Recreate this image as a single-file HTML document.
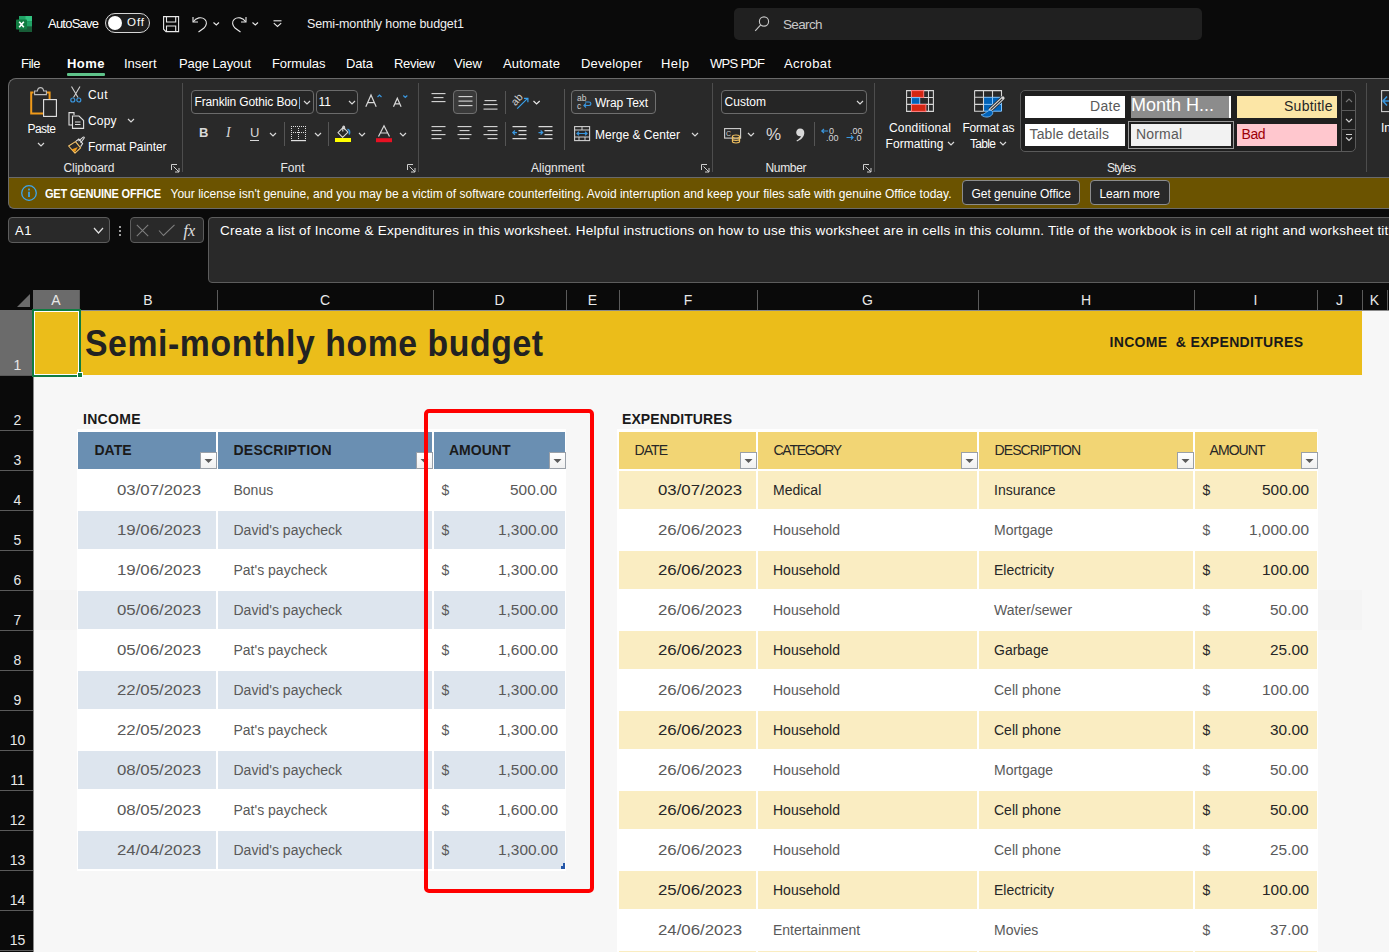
<!DOCTYPE html>
<html><head><meta charset="utf-8">
<style>
*{box-sizing:border-box}
html,body{margin:0;padding:0}
body{width:1389px;height:952px;overflow:hidden;background:#0a0a0a;position:relative;font-family:"Liberation Sans",sans-serif;color:#fff}
.a{position:absolute;white-space:nowrap}
svg{position:absolute;overflow:visible}
</style></head><body>

<svg style="left:16px;top:16px" width="17" height="17" viewBox="0 0 17 17">
<rect x="3" y="0" width="13" height="16" rx="1" fill="#185c37"/>
<rect x="3" y="0" width="13" height="5.3" fill="#21a366"/>
<rect x="9.5" y="0" width="6.5" height="5.3" fill="#33c481"/>
<rect x="9.5" y="5.3" width="6.5" height="5.3" fill="#21a366"/>
<rect x="3" y="10.6" width="13" height="5.4" fill="#185c37"/>
<rect x="0" y="3.5" width="11" height="10" rx="0.8" fill="#107c41"/>
<path d="M3.2 5.8 L7.8 11.2 M7.8 5.8 L3.2 11.2" stroke="#fff" stroke-width="1.6"/>
</svg>
<div class="a" style="left:48.00px;top:16.99px;font-size:13px;line-height:13px;color:#fff;letter-spacing:-0.768px;">AutoSave</div>
<div class="a" style="left:105px;top:13px;width:45px;height:20px;border:1.5px solid #d6d6d6;border-radius:10px;background:#1c1c1c"></div>
<div class="a" style="left:108px;top:16px;width:14px;height:14px;border-radius:7px;background:#fff"></div>
<div class="a" style="left:127.00px;top:17.26px;font-size:11.5px;line-height:11.5px;color:#fff;letter-spacing:0.937px;">Off</div>
<svg style="left:163px;top:16px" width="17" height="17" viewBox="0 0 17 17" fill="none" stroke="#e8e8e8" stroke-width="1.1">
<path d="M0.6 0.6 H15.6 V15.6 H3 L0.6 13.2 Z"/><path d="M3.5 0.6 V6 H12.7 V0.6"/><path d="M3.5 15.6 V10 H12.7 V15.6"/></svg>
<svg style="left:192px;top:16px" width="30" height="17" viewBox="0 0 30 17" fill="none" stroke="#e8e8e8" stroke-width="1.1">
<path d="M1 1 V6 H6"/><path d="M1.3 5.8 C4 1.5 9.5 0.5 12.8 3.3 C15.6 5.8 14.5 9.5 12 12 L6.5 16"/>
<path d="M21.5 6.5 L24.3 9 L27 6.5"/></svg>
<svg style="left:231px;top:16px" width="30" height="17" viewBox="0 0 30 17" fill="none" stroke="#e8e8e8" stroke-width="1.1">
<path d="M15 1 V6 H10"/><path d="M14.7 5.8 C12 1.5 6.5 0.5 3.2 3.3 C0.4 5.8 1.5 9.5 4 12 L9.5 16"/>
<path d="M21.5 6.5 L24.3 9 L27 6.5"/></svg>
<svg style="left:273px;top:20px" width="10" height="8" viewBox="0 0 10 8" fill="none" stroke="#e8e8e8" stroke-width="1.1">
<path d="M0.5 0.8 H8.5"/><path d="M0.8 3.2 L4.5 6.5 L8.2 3.2"/></svg>
<div class="a" style="left:307.00px;top:18.42px;font-size:12.5px;line-height:12.5px;color:#f0f0f0;letter-spacing:-0.117px;">Semi-monthly home budget1</div>
<div class="a" style="left:734px;top:8px;width:468px;height:32px;background:#202020;border-radius:5px"></div>
<svg style="left:754px;top:16px" width="16" height="16" viewBox="0 0 16 16" fill="none" stroke="#c8c8c8" stroke-width="1.1">
<circle cx="10" cy="5.5" r="4.6"/><path d="M6.7 8.8 L1.2 14.8"/></svg>
<div class="a" style="left:783.00px;top:17.57px;font-size:13.5px;line-height:13.5px;color:#c8c8c8;letter-spacing:-0.655px;">Search</div>
<div class="a" style="left:21.00px;top:56.99px;font-size:13px;line-height:13px;color:#fff;letter-spacing:-0.483px;">File</div>
<div class="a" style="left:67.00px;top:56.99px;font-size:13px;line-height:13px;color:#fff;font-weight:700;letter-spacing:0.460px;">Home</div>
<div class="a" style="left:124.00px;top:56.99px;font-size:13px;line-height:13px;color:#fff;letter-spacing:-0.003px;">Insert</div>
<div class="a" style="left:179.00px;top:56.99px;font-size:13px;line-height:13px;color:#fff;letter-spacing:-0.101px;">Page Layout</div>
<div class="a" style="left:272.00px;top:56.99px;font-size:13px;line-height:13px;color:#fff;letter-spacing:-0.097px;">Formulas</div>
<div class="a" style="left:346.00px;top:56.99px;font-size:13px;line-height:13px;color:#fff;letter-spacing:-0.153px;">Data</div>
<div class="a" style="left:394.00px;top:56.99px;font-size:13px;line-height:13px;color:#fff;letter-spacing:-0.325px;">Review</div>
<div class="a" style="left:454.00px;top:56.99px;font-size:13px;line-height:13px;color:#fff;letter-spacing:0.019px;">View</div>
<div class="a" style="left:503.00px;top:56.99px;font-size:13px;line-height:13px;color:#fff;letter-spacing:0.194px;">Automate</div>
<div class="a" style="left:581.00px;top:56.99px;font-size:13px;line-height:13px;color:#fff;letter-spacing:0.218px;">Developer</div>
<div class="a" style="left:661.00px;top:56.99px;font-size:13px;line-height:13px;color:#fff;letter-spacing:0.421px;">Help</div>
<div class="a" style="left:710.00px;top:56.99px;font-size:13px;line-height:13px;color:#fff;letter-spacing:-0.704px;">WPS PDF</div>
<div class="a" style="left:784.00px;top:56.99px;font-size:13px;line-height:13px;color:#fff;letter-spacing:0.366px;">Acrobat</div>
<div class="a" style="left:67px;top:73px;width:38px;height:3px;background:#5fc38a;border-radius:1px"></div>
<div class="a" style="left:8px;top:78px;width:1400px;height:101px;background:#292929;border-top:1px solid #6a6a6a;border-left:1px solid #6a6a6a;border-radius:8px 0 0 0"></div>
<div class="a" style="left:182px;top:83px;width:1px;height:89px;background:#4d4d4d;"></div>
<div class="a" style="left:418px;top:83px;width:1px;height:89px;background:#4d4d4d;"></div>
<div class="a" style="left:712px;top:83px;width:1px;height:89px;background:#4d4d4d;"></div>
<div class="a" style="left:874px;top:83px;width:1px;height:89px;background:#4d4d4d;"></div>
<div class="a" style="left:1366px;top:83px;width:1px;height:89px;background:#4d4d4d;"></div>
<div class="a" style="left:63.50px;top:161.84px;font-size:12px;line-height:12px;color:#e8e8e8;letter-spacing:-0.046px;">Clipboard</div>
<div class="a" style="left:280.50px;top:161.84px;font-size:12px;line-height:12px;color:#e8e8e8;letter-spacing:-0.004px;">Font</div>
<div class="a" style="left:531.00px;top:161.84px;font-size:12px;line-height:12px;color:#e8e8e8;letter-spacing:0.017px;">Alignment</div>
<div class="a" style="left:765.50px;top:161.84px;font-size:12px;line-height:12px;color:#e8e8e8;letter-spacing:-0.336px;">Number</div>
<div class="a" style="left:1107.00px;top:161.84px;font-size:12px;line-height:12px;color:#e8e8e8;letter-spacing:-0.736px;">Styles</div>
<svg style="left:171px;top:164px" width="9" height="9" viewBox="0 0 9 9" fill="none" stroke="#cfcfcf" stroke-width="1"><path d="M0.5 6 V0.5 H6"/><path d="M2.5 2.5 L8 8 M4 8 H8 V4"/></svg>
<svg style="left:407px;top:164px" width="9" height="9" viewBox="0 0 9 9" fill="none" stroke="#cfcfcf" stroke-width="1"><path d="M0.5 6 V0.5 H6"/><path d="M2.5 2.5 L8 8 M4 8 H8 V4"/></svg>
<svg style="left:701px;top:164px" width="9" height="9" viewBox="0 0 9 9" fill="none" stroke="#cfcfcf" stroke-width="1"><path d="M0.5 6 V0.5 H6"/><path d="M2.5 2.5 L8 8 M4 8 H8 V4"/></svg>
<svg style="left:863px;top:164px" width="9" height="9" viewBox="0 0 9 9" fill="none" stroke="#cfcfcf" stroke-width="1"><path d="M0.5 6 V0.5 H6"/><path d="M2.5 2.5 L8 8 M4 8 H8 V4"/></svg>
<svg style="left:0;top:0" width="100" height="160" viewBox="0 0 100 160" fill="none">
<path d="M33.5 92.5 H31.2 V113.4 H43" stroke="#f09a1a" stroke-width="2"/>
<path d="M47 92.5 H49.6 V99" stroke="#f09a1a" stroke-width="2"/>
<path d="M34.6 94.6 V91 H37.4 C37.6 88.6 38.8 87.6 40.5 87.6 C42.2 87.6 43.4 88.6 43.6 91 H46.4 V94.6 Z" stroke="#bdbdbd" stroke-width="1.1" fill="#292929"/>
<rect x="43.6" y="99.6" width="12.8" height="16.8" stroke="#e6e6e6" stroke-width="1.1" fill="#292929"/>
</svg>
<div class="a" style="left:27.50px;top:122.84px;font-size:12px;line-height:12px;color:#fff;letter-spacing:-0.547px;">Paste</div>
<svg style="left:37px;top:142px" width="8" height="5" viewBox="0 0 8 5" fill="none" stroke="#d8d8d8" stroke-width="1.2"><path d="M1 1 L4.0 4 L7 1"/></svg>
<svg style="left:70px;top:86px" width="12" height="17" viewBox="0 0 12 17" fill="none">
<path d="M1.5 0.5 L8 11.5 M10 0.5 L3.5 11.5" stroke="#cfcfcf" stroke-width="1.1"/>
<circle cx="2.8" cy="14" r="2" stroke="#3a96dd" stroke-width="1.2"/><circle cx="8.8" cy="14" r="2" stroke="#3a96dd" stroke-width="1.2"/></svg>
<div class="a" style="left:88.00px;top:88.84px;font-size:12px;line-height:12px;color:#fff;letter-spacing:0.413px;">Cut</div>
<svg style="left:68px;top:112px" width="17" height="17" viewBox="0 0 17 17" fill="none" stroke="#e0e0e0" stroke-width="1.1">
<path d="M6 3 V0.6 H1 V13 H4"/><path d="M4.5 4 H11 L15.6 8.5 V16.4 H4.5 Z"/><path d="M7 10 H12.5 M7 12.5 H12.5"/></svg>
<div class="a" style="left:88.00px;top:114.84px;font-size:12px;line-height:12px;color:#fff;letter-spacing:0.162px;">Copy</div>
<svg style="left:127px;top:118px" width="8" height="5" viewBox="0 0 8 5" fill="none" stroke="#d8d8d8" stroke-width="1.2"><path d="M1 1 L4.0 4 L7 1"/></svg>
<svg style="left:0;top:0" width="100" height="160" viewBox="0 0 100 160" fill="none">
<path d="M68.6 146 L75.5 141.6 L80.6 147.8 L75 153.2 Z" stroke="#f3c26a" stroke-width="1.1" stroke-linejoin="round"/>
<path d="M71.5 149.5 L77.8 147 L75 152.2 Z" fill="#f09a1a"/>
<path d="M75.8 141.4 L78.8 139 L82.6 143.6 L80.6 146.6" stroke="#e0e0e0" stroke-width="1.1"/>
<path d="M78.5 141.2 L83.2 137.2 C83.8 136.7 84.6 137.4 84.2 138 L80.6 143" stroke="#e0e0e0" stroke-width="1.1"/>
</svg>
<div class="a" style="left:88.00px;top:140.84px;font-size:12px;line-height:12px;color:#fff;letter-spacing:-0.066px;">Format Painter</div>
<div class="a" style="left:191px;top:90px;width:123px;height:24px;border:1px solid #6b6b6b;border-radius:4px;background:#252525"></div>
<div class="a" style="left:194.50px;top:95.84px;font-size:12px;line-height:12px;color:#fff;letter-spacing:-0.132px;">Franklin Gothic Boo</div>
<div class="a" style="left:298.5px;top:97px;width:1px;height:12px;background:#6aa8e0;"></div>
<svg style="left:303px;top:100px" width="8" height="5" viewBox="0 0 8 5" fill="none" stroke="#d8d8d8" stroke-width="1.2"><path d="M1 1 L4.0 4 L7 1"/></svg>
<div class="a" style="left:316px;top:90px;width:42px;height:24px;border:1px solid #6b6b6b;border-radius:4px;background:#252525"></div>
<div class="a" style="left:318.50px;top:95.84px;font-size:12px;line-height:12px;color:#fff;">11</div>
<svg style="left:348px;top:100px" width="8" height="5" viewBox="0 0 8 5" fill="none" stroke="#d8d8d8" stroke-width="1.2"><path d="M1 1 L4.0 4 L7 1"/></svg>
<svg style="left:365px;top:93px" width="44" height="15" viewBox="0 0 44 15" fill="none" stroke="#d8d8d8" stroke-width="1.2">
<path d="M0.8 13.8 L6 2 L11.2 13.8 M2.6 9.6 H9.4"/><path d="M12.5 4 L14.5 2 L16.5 4" stroke="#3a96dd"/>
<path d="M28.5 13.8 L32.3 5.2 L36.1 13.8 M29.8 10.8 H34.8"/><path d="M38.3 2.5 L40.3 4.5 L42.3 2.5" stroke="#3a96dd"/></svg>
<div class="a" style="left:199.00px;top:126.49px;font-size:13px;line-height:13px;color:#d8d8d8;font-weight:700;">B</div>
<div class="a" style="left:226.00px;top:125.65px;font-size:14px;line-height:14px;color:#d8d8d8;font-family:'Liberation Serif',serif;font-style:italic;">I</div>
<div class="a" style="left:250.00px;top:126.49px;font-size:13px;line-height:13px;color:#d8d8d8;">U</div>
<div class="a" style="left:250px;top:140px;width:9px;height:1px;background:#d8d8d8;"></div>
<svg style="left:269px;top:132px" width="8" height="5" viewBox="0 0 8 5" fill="none" stroke="#d8d8d8" stroke-width="1.2"><path d="M1 1 L4.0 4 L7 1"/></svg>
<div class="a" style="left:284px;top:122px;width:1px;height:24px;background:#555;"></div>
<svg style="left:0;top:0" width="400" height="160" viewBox="0 0 400 160"><g fill="#e0e0e0"><rect x="291" y="126" width="1" height="1"/><rect x="293" y="126" width="1" height="1"/><rect x="295" y="126" width="1" height="1"/><rect x="297" y="126" width="1" height="1"/><rect x="299" y="126" width="1" height="1"/><rect x="301" y="126" width="1" height="1"/><rect x="303" y="126" width="1" height="1"/><rect x="305" y="126" width="1" height="1"/><rect x="291" y="128" width="1" height="1"/><rect x="305" y="128" width="1" height="1"/><rect x="298" y="128" width="1" height="1"/><rect x="291" y="130" width="1" height="1"/><rect x="305" y="130" width="1" height="1"/><rect x="298" y="130" width="1" height="1"/><rect x="291" y="132" width="1" height="1"/><rect x="305" y="132" width="1" height="1"/><rect x="298" y="132" width="1" height="1"/><rect x="291" y="134" width="1" height="1"/><rect x="305" y="134" width="1" height="1"/><rect x="298" y="134" width="1" height="1"/><rect x="291" y="136" width="1" height="1"/><rect x="305" y="136" width="1" height="1"/><rect x="298" y="136" width="1" height="1"/><rect x="291" y="138" width="1" height="1"/><rect x="305" y="138" width="1" height="1"/><rect x="298" y="138" width="1" height="1"/><rect x="293" y="132" width="1" height="1"/><rect x="295" y="132" width="1" height="1"/><rect x="297" y="132" width="1" height="1"/><rect x="299" y="132" width="1" height="1"/><rect x="301" y="132" width="1" height="1"/><rect x="303" y="132" width="1" height="1"/><rect x="291" y="140" width="15" height="1.2"/></g></svg>
<svg style="left:314px;top:132px" width="8" height="5" viewBox="0 0 8 5" fill="none" stroke="#d8d8d8" stroke-width="1.2"><path d="M1 1 L4.0 4 L7 1"/></svg>
<div class="a" style="left:328px;top:122px;width:1px;height:24px;background:#555;"></div>
<svg style="left:0;top:0" width="400" height="160" viewBox="0 0 400 160" fill="none">
<path d="M338 132.6 L343.2 127.4 L348 132.2 L342.6 137.4 Z" stroke="#d8d8d8" stroke-width="1.1" stroke-linejoin="round"/>
<path d="M342.8 131.5 V127.2 C342.8 125.8 344.6 125.8 344.6 127.2 V129.5" stroke="#d8d8d8" stroke-width="1.1"/>
<path d="M347.5 129.2 C349.5 130 350 132 349.2 134.5" stroke="#3a96dd" stroke-width="1.6"/>
<rect x="335" y="138" width="16" height="4" fill="#ffff00"/></svg>
<svg style="left:358px;top:132px" width="8" height="5" viewBox="0 0 8 5" fill="none" stroke="#d8d8d8" stroke-width="1.2"><path d="M1 1 L4.0 4 L7 1"/></svg>
<svg style="left:375px;top:125px" width="18" height="18" viewBox="0 0 18 18" fill="none">
<path d="M3.5 11.5 L9 0.8 L14.5 11.5 M5.4 8 H12.6" stroke="#d8d8d8" stroke-width="1.2"/>
<rect x="1" y="13.2" width="16" height="4" fill="#e81123"/></svg>
<svg style="left:399px;top:132px" width="8" height="5" viewBox="0 0 8 5" fill="none" stroke="#d8d8d8" stroke-width="1.2"><path d="M1 1 L4.0 4 L7 1"/></svg>
<svg style="left:431px;top:93px" width="18" height="18" viewBox="0 0 18 18" fill="none" stroke="#d8d8d8" stroke-width="1.1"><path d="M0.5 0.6 H14.5"/><path d="M2.5 4.6 H12.5"/><path d="M0.5 8.6 H14.5"/></svg>
<div class="a" style="left:453px;top:90px;width:24px;height:24px;border:1px solid #707070;border-radius:4px;background:#3a3a3a"></div>
<svg style="left:458px;top:96px" width="18" height="18" viewBox="0 0 18 18" fill="none" stroke="#d8d8d8" stroke-width="1.1"><path d="M0.5 0.6 H14.5"/><path d="M0.5 5.1 H14.5"/><path d="M0.5 9.6 H14.5"/></svg>
<svg style="left:483px;top:100px" width="18" height="18" viewBox="0 0 18 18" fill="none" stroke="#d8d8d8" stroke-width="1.1"><path d="M1.5 0.6 H13.5"/><path d="M0.5 4.6 H14.5"/><path d="M0.5 9.1 H14.5"/></svg>
<div class="a" style="left:505px;top:91px;width:1px;height:23px;background:#555;"></div>
<svg style="left:0;top:0" width="600" height="160" viewBox="0 0 600 160" fill="none">
<text x="0" y="0" font-family="Liberation Sans" font-size="10.5" fill="#d0d0d0" transform="translate(515.5 106.2) rotate(-48)">ab</text>
<path d="M517.2 108.6 L527.6 98.4 M524 98.4 H527.9 V102.2" stroke="#3aa0ea" stroke-width="1.2"/>
<path d="M533.5 101 L536.6 104 L539.7 101" stroke="#e8e8e8" stroke-width="1.2"/></svg>
<div class="a" style="left:564px;top:89px;width:1px;height:61px;background:#555;"></div>
<div class="a" style="left:571px;top:90px;width:85px;height:24px;border:1px solid #707070;border-radius:4px;background:#2e2e2e"></div>
<svg style="left:576px;top:94px" width="17" height="17" viewBox="0 0 17 17" fill="none">
<text x="1" y="7" font-family="Liberation Sans" font-size="8.5" fill="#d0d0d0">ab</text>
<text x="1" y="15" font-family="Liberation Sans" font-size="8.5" fill="#d0d0d0">c</text>
<path d="M8 11.5 H13 C15.5 11.5 15.5 8 13 8 H9" stroke="#3a96dd" stroke-width="1.2"/><path d="M10 9.5 L8 11.5 L10 13.5" stroke="#3a96dd" stroke-width="1.2"/></svg>
<div class="a" style="left:595.00px;top:96.84px;font-size:12px;line-height:12px;color:#fff;letter-spacing:-0.072px;">Wrap Text</div>
<svg style="left:431px;top:126px" width="18" height="18" viewBox="0 0 18 18" fill="none" stroke="#d8d8d8" stroke-width="1.1"><path d="M0.5 0.6 H14.5"/><path d="M0.5 4.6 H10.5"/><path d="M0.5 8.6 H14.5"/><path d="M0.5 12.6 H10.5"/></svg>
<svg style="left:457px;top:126px" width="18" height="18" viewBox="0 0 18 18" fill="none" stroke="#d8d8d8" stroke-width="1.1"><path d="M0.5 0.6 H14.5"/><path d="M2.5 4.6 H12.5"/><path d="M0.5 8.6 H14.5"/><path d="M2.5 12.6 H12.5"/></svg>
<svg style="left:483px;top:126px" width="18" height="18" viewBox="0 0 18 18" fill="none" stroke="#d8d8d8" stroke-width="1.1"><path d="M0.5 0.6 H14.5"/><path d="M4.5 4.6 H14.5"/><path d="M0.5 8.6 H14.5"/><path d="M4.5 12.6 H14.5"/></svg>
<div class="a" style="left:505px;top:122px;width:1px;height:24px;background:#555;"></div>
<svg style="left:512px;top:126px" width="16" height="15" viewBox="0 0 16 15" fill="none">
<path d="M0.5 0.6 H14.5 M6.5 4.6 H14.5 M6.5 8.6 H14.5 M0.5 12.6 H14.5" stroke="#d8d8d8" stroke-width="1.1"/>
<path d="M0.8 6.6 H5 M3 4.5 L0.8 6.6 L3 8.7" stroke="#3a96dd" stroke-width="1.2"/></svg>
<svg style="left:538px;top:126px" width="16" height="15" viewBox="0 0 16 15" fill="none">
<path d="M0.5 0.6 H14.5 M6.5 4.6 H14.5 M6.5 8.6 H14.5 M0.5 12.6 H14.5" stroke="#d8d8d8" stroke-width="1.1"/>
<path d="M0.5 6.6 H4.7 M2.6 4.5 L4.7 6.6 L2.6 8.7" stroke="#3a96dd" stroke-width="1.2"/></svg>
<svg style="left:574px;top:126px" width="17" height="16" viewBox="0 0 17 16" fill="none">
<rect x="0.6" y="0.6" width="15" height="14" stroke="#d0d0d0" stroke-width="1.1"/>
<path d="M0.6 4 H15.6 M0.6 11 H15.6 M8 0.6 V4 M5 11 V14.6 M11 11 V14.6" stroke="#d0d0d0" stroke-width="1"/>
<path d="M3 7.5 H13 M5 5.8 L3 7.5 L5 9.2 M11 5.8 L13 7.5 L11 9.2" stroke="#3a96dd" stroke-width="1.2"/></svg>
<div class="a" style="left:595.00px;top:128.84px;font-size:12px;line-height:12px;color:#fff;letter-spacing:0.023px;">Merge &amp; Center</div>
<svg style="left:691px;top:132px" width="8" height="5" viewBox="0 0 8 5" fill="none" stroke="#d8d8d8" stroke-width="1.2"><path d="M1 1 L4.0 4 L7 1"/></svg>
<div class="a" style="left:721px;top:90px;width:146px;height:24px;border:1px solid #6b6b6b;border-radius:4px;background:#252525"></div>
<div class="a" style="left:724.50px;top:95.84px;font-size:12px;line-height:12px;color:#fff;letter-spacing:0.031px;">Custom</div>
<svg style="left:856px;top:100px" width="8" height="5" viewBox="0 0 8 5" fill="none" stroke="#d8d8d8" stroke-width="1.2"><path d="M1 1 L4.0 4 L7 1"/></svg>
<svg style="left:724px;top:128px" width="18" height="16" viewBox="0 0 18 16" fill="none">
<rect x="0.6" y="0.6" width="16" height="9.5" stroke="#d0d0d0" stroke-width="1.1" fill="#292929"/>
<text x="2" y="8" font-family="Liberation Sans" font-size="7" fill="#d0d0d0">C</text>
<ellipse cx="12" cy="8.5" rx="3.6" ry="1.5" stroke="#f0c060" stroke-width="1.1" fill="#292929"/>
<path d="M8.4 8.5 V13.6 C8.4 15.4 15.6 15.4 15.6 13.6 V8.5 M8.4 11 C8.4 12.8 15.6 12.8 15.6 11" stroke="#f0c060" stroke-width="1.1" fill="none"/></svg>
<svg style="left:747px;top:132px" width="8" height="5" viewBox="0 0 8 5" fill="none" stroke="#d8d8d8" stroke-width="1.2"><path d="M1 1 L4.0 4 L7 1"/></svg>
<div class="a" style="left:766.00px;top:126.11px;font-size:17px;line-height:17px;color:#d8d8d8;">%</div>
<svg style="left:795px;top:128px" width="11" height="14" viewBox="0 0 11 14"><path d="M5 0.5 C7.8 0.5 9.5 2.5 9.3 5.3 C9 9 6 12 2 13.5 L1.5 12.6 C4 11.2 5.6 9.5 6 8.3 C3 8.6 1.2 6.8 1.2 4.5 C1.2 2.2 2.8 0.5 5 0.5 Z" fill="#d8d8d8"/></svg>
<div class="a" style="left:814px;top:122px;width:1px;height:24px;background:#555;"></div>
<svg style="left:821px;top:126px" width="44" height="16" viewBox="0 0 44 16" fill="none">
<path d="M0.8 5 H7 M3 3 L0.8 5 L3 7" stroke="#3a96dd" stroke-width="1.2"/>
<text x="8" y="8" font-family="Liberation Sans" font-size="9" fill="#d8d8d8">0</text>
<text x="5" y="15" font-family="Liberation Sans" font-size="9" fill="#d8d8d8">.00</text>
<text x="29" y="8" font-family="Liberation Sans" font-size="9" fill="#d8d8d8">.00</text>
<path d="M25.5 11.5 H32 M30 9.5 L32 11.5 L30 13.5" stroke="#3a96dd" stroke-width="1.2"/>
<text x="33" y="15" font-family="Liberation Sans" font-size="9" fill="#d8d8d8">.0</text></svg>
<svg style="left:0;top:0" width="960" height="160" viewBox="0 0 960 160" fill="none">
<path d="M906.6 90.6 H933.4 V111.4 H906.6 Z M906.6 97.5 H933.4 M906.6 104.4 H933.4 M911.5 90.6 V111.4 M928.5 90.6 V111.4" stroke="#d6d6d6" stroke-width="1.1"/>
<rect x="911.5" y="90.6" width="12.2" height="6.8" fill="#d42612" stroke="#ff7a7a" stroke-width="1"/>
<rect x="911.5" y="97.6" width="8.2" height="6.6" fill="#0062b8" stroke="#80c4ff" stroke-width="1"/>
<rect x="911.5" y="104.5" width="14.4" height="6.9" fill="#d42612" stroke="#ff7a7a" stroke-width="1"/>
</svg>
<div class="a" style="left:889.00px;top:121.84px;font-size:12px;line-height:12px;color:#fff;letter-spacing:0.196px;">Conditional</div>
<div class="a" style="left:885.50px;top:137.84px;font-size:12px;line-height:12px;color:#fff;letter-spacing:0.072px;">Formatting</div>
<svg style="left:947px;top:141px" width="8" height="5" viewBox="0 0 8 5" fill="none" stroke="#d8d8d8" stroke-width="1.2"><path d="M1 1 L4.0 4 L7 1"/></svg>
<svg style="left:0;top:0" width="1020" height="160" viewBox="0 0 1020 160" fill="none">
<rect x="983.5" y="97.3" width="18" height="13.9" fill="#0062b8"/>
<path d="M983.5 97.3 H1001.5 V111.2 H983.5 M992.5 97.3 V111.2 M983.5 104.4 H1001.5" stroke="#80c4ff" stroke-width="1"/>
<path d="M974.6 90.6 H1001.5 V96.8 M974.6 90.6 V111.2 H983.5 M974.6 97.3 H983.5 M974.6 104.4 H983.5 M983.5 90.6 V111.2 M992.5 90.6 V97.3" stroke="#d6d6d6" stroke-width="1.1"/>
<path d="M1003 98 L990.2 110" stroke="#292929" stroke-width="5"/>
<path d="M1003 98 L990.2 110" stroke="#d6d6d6" stroke-width="3.2" stroke-linecap="round"/>
<path d="M1002.2 98.8 L990.6 109.6" stroke="#292929" stroke-width="1.1"/>
<path d="M981 114.6 C984 114.8 986 112.2 988.4 110.8 C990.4 109.8 992.8 110.6 992.8 112.8 C992.6 115.6 989 117.4 985.8 117 C983.8 116.8 982 115.8 981 114.6 Z" fill="#0062b8" stroke="#80c4ff" stroke-width="0.8"/>
</svg>
<div class="a" style="left:962.50px;top:121.84px;font-size:12px;line-height:12px;color:#fff;letter-spacing:-0.252px;">Format as</div>
<div class="a" style="left:970.00px;top:137.84px;font-size:12px;line-height:12px;color:#fff;letter-spacing:-0.672px;">Table</div>
<svg style="left:999px;top:141px" width="8" height="5" viewBox="0 0 8 5" fill="none" stroke="#d8d8d8" stroke-width="1.2"><path d="M1 1 L4.0 4 L7 1"/></svg>
<div class="a" style="left:1020px;top:90px;width:336px;height:62px;border:1px solid #5a5a5a;border-radius:5px;background:#1f1f1f"></div>
<div class="a" style="left:1341px;top:91px;width:1px;height:60px;background:#5a5a5a;"></div>
<div class="a" style="left:1342px;top:110px;width:13px;height:1px;background:#5a5a5a;"></div>
<div class="a" style="left:1342px;top:129px;width:13px;height:1px;background:#5a5a5a;"></div>
<svg style="left:1343px;top:95px" width="12" height="50" viewBox="0 0 12 50" fill="none" stroke="#d0d0d0" stroke-width="1.1">
<path d="M3 7 L6 4 L9 7" stroke="#777"/><path d="M3 24 L6 27 L9 24"/><path d="M3 39.5 H9 M3 42.5 L6 45.5 L9 42.5"/></svg>
<div class="a" style="left:1025px;top:96px;width:100px;height:22px;background:#fff;"></div>
<div class="a" style="left:1090.00px;top:98.95px;font-size:14px;line-height:14px;color:#595959;letter-spacing:0.309px;">Date</div>
<div class="a" style="left:1131px;top:96px;width:98px;height:22px;background:#8c8c8c;"></div>
<div class="a" style="left:1229px;top:96px;width:2px;height:22px;background:#fff;"></div>
<div class="a" style="left:1131px;top:96px;width:98px;height:22px;overflow:hidden"><div class="a" style="left:0;top:-2px;font-size:18px;line-height:22px;color:#fff">Month H...</div></div>
<div class="a" style="left:1237px;top:96px;width:100px;height:22px;background:#fce6a6;"></div>
<div class="a" style="left:1284.00px;top:98.75px;font-size:14px;line-height:14px;color:#262626;letter-spacing:0.257px;">Subtitle</div>
<div class="a" style="left:1025px;top:124px;width:100px;height:22px;background:#fff;"></div>
<div class="a" style="left:1029.50px;top:126.95px;font-size:14px;line-height:14px;color:#595959;letter-spacing:0.139px;">Table details</div>
<div class="a" style="left:1128px;top:121px;width:106px;height:28px;border:1px solid #9a9a9a;background:#1f1f1f"></div>
<div class="a" style="left:1131px;top:124px;width:100px;height:22px;background:#f2f2f2;"></div>
<div class="a" style="left:1136.00px;top:126.95px;font-size:14px;line-height:14px;color:#595959;letter-spacing:0.176px;">Normal</div>
<div class="a" style="left:1237px;top:124px;width:100px;height:22px;background:#ffc7ce;"></div>
<div class="a" style="left:1241.50px;top:126.65px;font-size:14px;line-height:14px;color:#9c0006;letter-spacing:-0.456px;">Bad</div>
<svg style="left:1381px;top:90px" width="12" height="22" viewBox="0 0 12 22" fill="none">
<rect x="0.6" y="0.6" width="14" height="21" stroke="#d0d0d0" stroke-width="1.1"/>
<path d="M2 11 H12 M6 6.5 L2 11 L6 15.5" stroke="#3a96dd" stroke-width="1.6"/></svg>
<div class="a" style="left:1381.00px;top:121.84px;font-size:12px;line-height:12px;color:#fff;">In</div>
<div class="a" style="left:8px;top:177px;width:1400px;height:32px;background:#6b5300;border-top:1px solid #6a6a6a;border-left:1px solid #6a6a6a;border-bottom:1px solid #6a6a6a;border-radius:0 0 0 6px"></div>
<svg style="left:21px;top:185px" width="17" height="17" viewBox="0 0 17 17" fill="none">
<circle cx="8" cy="8" r="7.3" stroke="#3fa6ec" stroke-width="1.3"/><path d="M8 6.8 V12" stroke="#3fa6ec" stroke-width="1.7"/><rect x="7.1" y="3.6" width="1.8" height="1.8" fill="#3fa6ec"/></svg>
<div class="a" style="left:45.00px;top:187.72px;font-size:12.5px;line-height:12.5px;color:#fff;font-weight:700;letter-spacing:-0.212px;transform:scaleX(0.8800);transform-origin:0 0;">GET GENUINE OFFICE</div>
<div class="a" style="left:170.50px;top:188.14px;font-size:12px;line-height:12px;color:#fff;letter-spacing:0.018px;">Your license isn&#x27;t genuine, and you may be a victim of software counterfeiting. Avoid interruption and keep your files safe with genuine Office today.</div>
<div class="a" style="left:962px;top:180px;width:118px;height:25px;border:1px solid #8c8c8c;border-radius:4px;background:#292929"></div>
<div class="a" style="left:971.50px;top:187.84px;font-size:12px;line-height:12px;color:#fff;letter-spacing:-0.020px;">Get genuine Office</div>
<div class="a" style="left:1090px;top:180px;width:80px;height:25px;border:1px solid #8c8c8c;border-radius:4px;background:#292929"></div>
<div class="a" style="left:1099.50px;top:187.84px;font-size:12px;line-height:12px;color:#fff;letter-spacing:-0.096px;">Learn more</div>
<div class="a" style="left:8px;top:217px;width:102px;height:26px;background:#292929;border:1px solid #5c5c5c;border-radius:4px"></div>
<div class="a" style="left:15.00px;top:223.99px;font-size:13px;line-height:13px;color:#fff;letter-spacing:0.598px;">A1</div>
<svg style="left:93px;top:227px" width="12" height="8" viewBox="0 0 12 8" fill="none" stroke="#e0e0e0" stroke-width="1.2"><path d="M1 1 L5.5 6 L10 1"/></svg>
<div class="a" style="left:119px;top:226px;width:2px;height:2px;background:#d0d0d0;border-radius:1px"></div>
<div class="a" style="left:119px;top:230px;width:2px;height:2px;background:#d0d0d0;border-radius:1px"></div>
<div class="a" style="left:119px;top:234px;width:2px;height:2px;background:#d0d0d0;border-radius:1px"></div>
<div class="a" style="left:130px;top:217px;width:74px;height:26px;background:#292929;border:1px solid #5c5c5c;border-radius:4px"></div>
<svg style="left:136px;top:224px" width="40" height="13" viewBox="0 0 40 13" fill="none" stroke="#7e7e7e" stroke-width="1.1">
<path d="M0.8 0.8 L12.2 12.2 M12.2 0.8 L0.8 12.2"/><path d="M23 6.5 L27.5 11.5 L38.5 0.8"/></svg>
<div class="a" style="left:183.50px;top:222.95px;font-size:16px;line-height:16px;color:#e0e0e0;font-family:'Liberation Serif',serif;font-style:italic;">fx</div>
<div class="a" style="left:208px;top:217px;width:1200px;height:66px;background:#292929;border:1px solid #5c5c5c;border-radius:4px"></div>
<div class="a" style="left:209px;top:218px;width:1180px;height:40px;overflow:hidden">
<div class="a" style="left:11.00px;top:5.57px;font-size:13.5px;line-height:13.5px;color:#fff;letter-spacing:0.235px;">Create a list of Income &amp; Expenditures in this worksheet. Helpful instructions on how to use this worksheet are in cells in this column. Title of the workbook is in cell at right and worksheet title</div>
</div>
<div class="a" style="left:33px;top:310px;width:1356px;height:642px;background:#f7f7f7;"></div>
<div class="a" style="left:33px;top:310px;width:1329px;height:65px;background:#ebbd1a;"></div>
<div class="a" style="left:85.00px;top:325.25px;font-size:37.5px;line-height:37.5px;color:#222;font-weight:700;letter-spacing:0.657px;transform:scaleX(0.9000);transform-origin:0 0;">Semi-monthly home budget</div>
<div class="a" style="left:1109.50px;top:335.15px;font-size:14px;line-height:14px;color:#1a1a1a;font-weight:700;letter-spacing:0.324px;white-space:pre;">INCOME  &amp; EXPENDITURES</div>
<div class="a" style="left:33px;top:290px;width:46px;height:20px;background:#6b6b6b;"></div>
<div class="a" style="left:51.33px;top:293.15px;font-size:14px;line-height:14px;color:#e8e8e8;">A</div>
<div class="a" style="left:79px;top:290px;width:1px;height:20px;background:#5a5a5a;"></div>
<div class="a" style="left:143.33px;top:293.15px;font-size:14px;line-height:14px;color:#e8e8e8;">B</div>
<div class="a" style="left:217px;top:290px;width:1px;height:20px;background:#5a5a5a;"></div>
<div class="a" style="left:319.94px;top:293.15px;font-size:14px;line-height:14px;color:#e8e8e8;">C</div>
<div class="a" style="left:433px;top:290px;width:1px;height:20px;background:#5a5a5a;"></div>
<div class="a" style="left:494.44px;top:293.15px;font-size:14px;line-height:14px;color:#e8e8e8;">D</div>
<div class="a" style="left:566px;top:290px;width:1px;height:20px;background:#5a5a5a;"></div>
<div class="a" style="left:587.83px;top:293.15px;font-size:14px;line-height:14px;color:#e8e8e8;">E</div>
<div class="a" style="left:619px;top:290px;width:1px;height:20px;background:#5a5a5a;"></div>
<div class="a" style="left:683.72px;top:293.15px;font-size:14px;line-height:14px;color:#e8e8e8;">F</div>
<div class="a" style="left:757px;top:290px;width:1px;height:20px;background:#5a5a5a;"></div>
<div class="a" style="left:862.06px;top:293.15px;font-size:14px;line-height:14px;color:#e8e8e8;">G</div>
<div class="a" style="left:978px;top:290px;width:1px;height:20px;background:#5a5a5a;"></div>
<div class="a" style="left:1080.94px;top:293.15px;font-size:14px;line-height:14px;color:#e8e8e8;">H</div>
<div class="a" style="left:1194px;top:290px;width:1px;height:20px;background:#5a5a5a;"></div>
<div class="a" style="left:1253.56px;top:293.15px;font-size:14px;line-height:14px;color:#e8e8e8;">I</div>
<div class="a" style="left:1317px;top:290px;width:1px;height:20px;background:#5a5a5a;"></div>
<div class="a" style="left:1336.00px;top:293.15px;font-size:14px;line-height:14px;color:#e8e8e8;">J</div>
<div class="a" style="left:1362px;top:290px;width:1px;height:20px;background:#5a5a5a;"></div>
<div class="a" style="left:1369.83px;top:293.15px;font-size:14px;line-height:14px;color:#e8e8e8;">K</div>
<div class="a" style="left:1387px;top:290px;width:1px;height:20px;background:#5a5a5a;"></div>
<div class="a" style="left:0px;top:310px;width:1389px;height:1px;background:#8a8a8a;"></div>
<svg style="left:0;top:290px" width="33" height="20"><polygon points="30,4 30,17 17,17" fill="#6b6b6b"/></svg>
<div class="a" style="left:33px;top:310px;width:1px;height:642px;background:#8a8a8a;"></div>
<div class="a" style="left:0px;top:310px;width:33px;height:65px;background:#6b6b6b;"></div>
<div class="a" style="left:13.61px;top:358.15px;font-size:14px;line-height:14px;color:#e8e8e8;">1</div>
<div class="a" style="left:0px;top:375px;width:33px;height:1px;background:#5a5a5a;"></div>
<div class="a" style="left:13.61px;top:413.15px;font-size:14px;line-height:14px;color:#e8e8e8;">2</div>
<div class="a" style="left:0px;top:430px;width:33px;height:1px;background:#5a5a5a;"></div>
<div class="a" style="left:13.61px;top:453.15px;font-size:14px;line-height:14px;color:#e8e8e8;">3</div>
<div class="a" style="left:0px;top:470px;width:33px;height:1px;background:#5a5a5a;"></div>
<div class="a" style="left:13.61px;top:493.15px;font-size:14px;line-height:14px;color:#e8e8e8;">4</div>
<div class="a" style="left:0px;top:510px;width:33px;height:1px;background:#5a5a5a;"></div>
<div class="a" style="left:13.61px;top:533.15px;font-size:14px;line-height:14px;color:#e8e8e8;">5</div>
<div class="a" style="left:0px;top:550px;width:33px;height:1px;background:#5a5a5a;"></div>
<div class="a" style="left:13.61px;top:573.15px;font-size:14px;line-height:14px;color:#e8e8e8;">6</div>
<div class="a" style="left:0px;top:590px;width:33px;height:1px;background:#5a5a5a;"></div>
<div class="a" style="left:13.61px;top:613.15px;font-size:14px;line-height:14px;color:#e8e8e8;">7</div>
<div class="a" style="left:0px;top:630px;width:33px;height:1px;background:#5a5a5a;"></div>
<div class="a" style="left:13.61px;top:653.15px;font-size:14px;line-height:14px;color:#e8e8e8;">8</div>
<div class="a" style="left:0px;top:670px;width:33px;height:1px;background:#5a5a5a;"></div>
<div class="a" style="left:13.61px;top:693.15px;font-size:14px;line-height:14px;color:#e8e8e8;">9</div>
<div class="a" style="left:0px;top:710px;width:33px;height:1px;background:#5a5a5a;"></div>
<div class="a" style="left:9.71px;top:733.15px;font-size:14px;line-height:14px;color:#e8e8e8;">10</div>
<div class="a" style="left:0px;top:750px;width:33px;height:1px;background:#5a5a5a;"></div>
<div class="a" style="left:10.23px;top:773.15px;font-size:14px;line-height:14px;color:#e8e8e8;">11</div>
<div class="a" style="left:0px;top:790px;width:33px;height:1px;background:#5a5a5a;"></div>
<div class="a" style="left:9.71px;top:813.15px;font-size:14px;line-height:14px;color:#e8e8e8;">12</div>
<div class="a" style="left:0px;top:830px;width:33px;height:1px;background:#5a5a5a;"></div>
<div class="a" style="left:9.71px;top:853.15px;font-size:14px;line-height:14px;color:#e8e8e8;">13</div>
<div class="a" style="left:0px;top:870px;width:33px;height:1px;background:#5a5a5a;"></div>
<div class="a" style="left:9.71px;top:893.15px;font-size:14px;line-height:14px;color:#e8e8e8;">14</div>
<div class="a" style="left:0px;top:910px;width:33px;height:1px;background:#5a5a5a;"></div>
<div class="a" style="left:9.71px;top:933.15px;font-size:14px;line-height:14px;color:#e8e8e8;">15</div>
<div class="a" style="left:0px;top:950px;width:33px;height:1px;background:#5a5a5a;"></div>
<div class="a" style="left:83.00px;top:412.15px;font-size:14px;line-height:14px;color:#1a1a1a;font-weight:700;letter-spacing:0.300px;">INCOME</div>
<div class="a" style="left:622.00px;top:412.15px;font-size:14px;line-height:14px;color:#1a1a1a;font-weight:700;letter-spacing:0.099px;">EXPENDITURES</div>
<div class="a" style="left:77px;top:429px;width:489px;height:442px;background:#fff;"></div>
<div class="a" style="left:78px;top:432px;width:138px;height:37px;background:#6a8fb2;"></div>
<div class="a" style="left:218px;top:432px;width:214px;height:37px;background:#6a8fb2;"></div>
<div class="a" style="left:434px;top:432px;width:131px;height:37px;background:#6a8fb2;"></div>
<div class="a" style="left:94.50px;top:443.15px;font-size:14px;line-height:14px;color:#1a1a1a;font-weight:700;">DATE</div>
<div class="a" style="left:233.50px;top:443.15px;font-size:14px;line-height:14px;color:#1a1a1a;font-weight:700;letter-spacing:0.232px;">DESCRIPTION</div>
<div class="a" style="left:449.00px;top:443.15px;font-size:14px;line-height:14px;color:#1a1a1a;font-weight:700;">AMOUNT</div>
<div class="a" style="left:200px;top:452px;width:17px;height:17px;background:linear-gradient(#fff,#f0f0f0);border:1px solid #9aa0a8"></div>
<svg style="left:200px;top:452px" width="17" height="17"><polygon points="4.5,7 12.5,7 8.5,11" fill="#5a5a5a"/></svg>
<div class="a" style="left:416px;top:452px;width:17px;height:17px;background:linear-gradient(#fff,#f0f0f0);border:1px solid #9aa0a8"></div>
<svg style="left:416px;top:452px" width="17" height="17"><polygon points="4.5,7 12.5,7 8.5,11" fill="#5a5a5a"/></svg>
<div class="a" style="left:549px;top:452px;width:17px;height:17px;background:linear-gradient(#fff,#f0f0f0);border:1px solid #9aa0a8"></div>
<svg style="left:549px;top:452px" width="17" height="17"><polygon points="4.5,7 12.5,7 8.5,11" fill="#5a5a5a"/></svg>
<div class="a" style="left:117.42px;top:483.15px;font-size:14px;line-height:14px;color:#595959;transform:scaleX(1.2000);transform-origin:0 0;">03/07/2023</div>
<div class="a" style="left:233.50px;top:483.15px;font-size:14px;line-height:14px;color:#595959;">Bonus</div>
<div class="a" style="left:441.50px;top:483.15px;font-size:14px;line-height:14px;color:#595959;">$</div>
<div class="a" style="left:510.40px;top:483.15px;font-size:14px;line-height:14px;color:#595959;transform:scaleX(1.1000);transform-origin:0 0;">500.00</div>
<div class="a" style="left:78px;top:511px;width:138px;height:38px;background:#dde5ee;"></div>
<div class="a" style="left:218px;top:511px;width:214px;height:38px;background:#dde5ee;"></div>
<div class="a" style="left:434px;top:511px;width:131px;height:38px;background:#dde5ee;"></div>
<div class="a" style="left:117.42px;top:523.15px;font-size:14px;line-height:14px;color:#595959;transform:scaleX(1.2000);transform-origin:0 0;">19/06/2023</div>
<div class="a" style="left:233.50px;top:523.15px;font-size:14px;line-height:14px;color:#595959;">David&#x27;s paycheck</div>
<div class="a" style="left:441.50px;top:523.15px;font-size:14px;line-height:14px;color:#595959;">$</div>
<div class="a" style="left:497.55px;top:523.15px;font-size:14px;line-height:14px;color:#595959;transform:scaleX(1.1000);transform-origin:0 0;">1,300.00</div>
<div class="a" style="left:117.42px;top:563.15px;font-size:14px;line-height:14px;color:#595959;transform:scaleX(1.2000);transform-origin:0 0;">19/06/2023</div>
<div class="a" style="left:233.50px;top:563.15px;font-size:14px;line-height:14px;color:#595959;">Pat&#x27;s paycheck</div>
<div class="a" style="left:441.50px;top:563.15px;font-size:14px;line-height:14px;color:#595959;">$</div>
<div class="a" style="left:497.55px;top:563.15px;font-size:14px;line-height:14px;color:#595959;transform:scaleX(1.1000);transform-origin:0 0;">1,300.00</div>
<div class="a" style="left:78px;top:591px;width:138px;height:38px;background:#dde5ee;"></div>
<div class="a" style="left:218px;top:591px;width:214px;height:38px;background:#dde5ee;"></div>
<div class="a" style="left:434px;top:591px;width:131px;height:38px;background:#dde5ee;"></div>
<div class="a" style="left:117.42px;top:603.15px;font-size:14px;line-height:14px;color:#595959;transform:scaleX(1.2000);transform-origin:0 0;">05/06/2023</div>
<div class="a" style="left:233.50px;top:603.15px;font-size:14px;line-height:14px;color:#595959;">David&#x27;s paycheck</div>
<div class="a" style="left:441.50px;top:603.15px;font-size:14px;line-height:14px;color:#595959;">$</div>
<div class="a" style="left:497.55px;top:603.15px;font-size:14px;line-height:14px;color:#595959;transform:scaleX(1.1000);transform-origin:0 0;">1,500.00</div>
<div class="a" style="left:117.42px;top:643.15px;font-size:14px;line-height:14px;color:#595959;transform:scaleX(1.2000);transform-origin:0 0;">05/06/2023</div>
<div class="a" style="left:233.50px;top:643.15px;font-size:14px;line-height:14px;color:#595959;">Pat&#x27;s paycheck</div>
<div class="a" style="left:441.50px;top:643.15px;font-size:14px;line-height:14px;color:#595959;">$</div>
<div class="a" style="left:497.55px;top:643.15px;font-size:14px;line-height:14px;color:#595959;transform:scaleX(1.1000);transform-origin:0 0;">1,600.00</div>
<div class="a" style="left:78px;top:671px;width:138px;height:38px;background:#dde5ee;"></div>
<div class="a" style="left:218px;top:671px;width:214px;height:38px;background:#dde5ee;"></div>
<div class="a" style="left:434px;top:671px;width:131px;height:38px;background:#dde5ee;"></div>
<div class="a" style="left:117.42px;top:683.15px;font-size:14px;line-height:14px;color:#595959;transform:scaleX(1.2000);transform-origin:0 0;">22/05/2023</div>
<div class="a" style="left:233.50px;top:683.15px;font-size:14px;line-height:14px;color:#595959;">David&#x27;s paycheck</div>
<div class="a" style="left:441.50px;top:683.15px;font-size:14px;line-height:14px;color:#595959;">$</div>
<div class="a" style="left:497.55px;top:683.15px;font-size:14px;line-height:14px;color:#595959;transform:scaleX(1.1000);transform-origin:0 0;">1,300.00</div>
<div class="a" style="left:117.42px;top:723.15px;font-size:14px;line-height:14px;color:#595959;transform:scaleX(1.2000);transform-origin:0 0;">22/05/2023</div>
<div class="a" style="left:233.50px;top:723.15px;font-size:14px;line-height:14px;color:#595959;">Pat&#x27;s paycheck</div>
<div class="a" style="left:441.50px;top:723.15px;font-size:14px;line-height:14px;color:#595959;">$</div>
<div class="a" style="left:497.55px;top:723.15px;font-size:14px;line-height:14px;color:#595959;transform:scaleX(1.1000);transform-origin:0 0;">1,300.00</div>
<div class="a" style="left:78px;top:751px;width:138px;height:38px;background:#dde5ee;"></div>
<div class="a" style="left:218px;top:751px;width:214px;height:38px;background:#dde5ee;"></div>
<div class="a" style="left:434px;top:751px;width:131px;height:38px;background:#dde5ee;"></div>
<div class="a" style="left:117.42px;top:763.15px;font-size:14px;line-height:14px;color:#595959;transform:scaleX(1.2000);transform-origin:0 0;">08/05/2023</div>
<div class="a" style="left:233.50px;top:763.15px;font-size:14px;line-height:14px;color:#595959;">David&#x27;s paycheck</div>
<div class="a" style="left:441.50px;top:763.15px;font-size:14px;line-height:14px;color:#595959;">$</div>
<div class="a" style="left:497.55px;top:763.15px;font-size:14px;line-height:14px;color:#595959;transform:scaleX(1.1000);transform-origin:0 0;">1,500.00</div>
<div class="a" style="left:117.42px;top:803.15px;font-size:14px;line-height:14px;color:#595959;transform:scaleX(1.2000);transform-origin:0 0;">08/05/2023</div>
<div class="a" style="left:233.50px;top:803.15px;font-size:14px;line-height:14px;color:#595959;">Pat&#x27;s paycheck</div>
<div class="a" style="left:441.50px;top:803.15px;font-size:14px;line-height:14px;color:#595959;">$</div>
<div class="a" style="left:497.55px;top:803.15px;font-size:14px;line-height:14px;color:#595959;transform:scaleX(1.1000);transform-origin:0 0;">1,600.00</div>
<div class="a" style="left:78px;top:831px;width:138px;height:38px;background:#dde5ee;"></div>
<div class="a" style="left:218px;top:831px;width:214px;height:38px;background:#dde5ee;"></div>
<div class="a" style="left:434px;top:831px;width:131px;height:38px;background:#dde5ee;"></div>
<div class="a" style="left:117.42px;top:843.15px;font-size:14px;line-height:14px;color:#595959;transform:scaleX(1.2000);transform-origin:0 0;">24/04/2023</div>
<div class="a" style="left:233.50px;top:843.15px;font-size:14px;line-height:14px;color:#595959;">David&#x27;s paycheck</div>
<div class="a" style="left:441.50px;top:843.15px;font-size:14px;line-height:14px;color:#595959;">$</div>
<div class="a" style="left:497.55px;top:843.15px;font-size:14px;line-height:14px;color:#595959;transform:scaleX(1.1000);transform-origin:0 0;">1,300.00</div>
<div class="a" style="left:561px;top:866px;width:4px;height:3px;background:#2456a8;"></div>
<div class="a" style="left:563px;top:863px;width:2px;height:6px;background:#2456a8;"></div>
<div class="a" style="left:617px;top:429px;width:701px;height:523px;background:#fff;"></div>
<div class="a" style="left:619px;top:432px;width:137px;height:37px;background:#f2d574;"></div>
<div class="a" style="left:758px;top:432px;width:219px;height:37px;background:#f2d574;"></div>
<div class="a" style="left:979px;top:432px;width:214px;height:37px;background:#f2d574;"></div>
<div class="a" style="left:1195px;top:432px;width:122px;height:37px;background:#f2d574;"></div>
<div class="a" style="left:634.50px;top:443.15px;font-size:14px;line-height:14px;color:#262626;letter-spacing:-0.900px;">DATE</div>
<div class="a" style="left:773.50px;top:443.15px;font-size:14px;line-height:14px;color:#262626;letter-spacing:-1.239px;">CATEGORY</div>
<div class="a" style="left:994.50px;top:443.15px;font-size:14px;line-height:14px;color:#262626;letter-spacing:-0.908px;">DESCRIPTION</div>
<div class="a" style="left:1209.50px;top:443.15px;font-size:14px;line-height:14px;color:#262626;letter-spacing:-0.933px;">AMOUNT</div>
<div class="a" style="left:740px;top:452px;width:17px;height:17px;background:linear-gradient(#fff,#f0f0f0);border:1px solid #9aa0a8"></div>
<svg style="left:740px;top:452px" width="17" height="17"><polygon points="4.5,7 12.5,7 8.5,11" fill="#5a5a5a"/></svg>
<div class="a" style="left:961px;top:452px;width:17px;height:17px;background:linear-gradient(#fff,#f0f0f0);border:1px solid #9aa0a8"></div>
<svg style="left:961px;top:452px" width="17" height="17"><polygon points="4.5,7 12.5,7 8.5,11" fill="#5a5a5a"/></svg>
<div class="a" style="left:1177px;top:452px;width:17px;height:17px;background:linear-gradient(#fff,#f0f0f0);border:1px solid #9aa0a8"></div>
<svg style="left:1177px;top:452px" width="17" height="17"><polygon points="4.5,7 12.5,7 8.5,11" fill="#5a5a5a"/></svg>
<div class="a" style="left:1301px;top:452px;width:17px;height:17px;background:linear-gradient(#fff,#f0f0f0);border:1px solid #9aa0a8"></div>
<svg style="left:1301px;top:452px" width="17" height="17"><polygon points="4.5,7 12.5,7 8.5,11" fill="#5a5a5a"/></svg>
<div class="a" style="left:619px;top:471px;width:137px;height:38px;background:#faedc2;"></div>
<div class="a" style="left:758px;top:471px;width:219px;height:38px;background:#faedc2;"></div>
<div class="a" style="left:979px;top:471px;width:214px;height:38px;background:#faedc2;"></div>
<div class="a" style="left:1195px;top:471px;width:122px;height:38px;background:#faedc2;"></div>
<div class="a" style="left:657.92px;top:483.15px;font-size:14px;line-height:14px;color:#262626;transform:scaleX(1.2000);transform-origin:0 0;">03/07/2023</div>
<div class="a" style="left:773.00px;top:483.15px;font-size:14px;line-height:14px;color:#262626;">Medical</div>
<div class="a" style="left:994.00px;top:483.15px;font-size:14px;line-height:14px;color:#262626;">Insurance</div>
<div class="a" style="left:1202.50px;top:483.15px;font-size:14px;line-height:14px;color:#262626;">$</div>
<div class="a" style="left:1261.90px;top:483.15px;font-size:14px;line-height:14px;color:#262626;transform:scaleX(1.1000);transform-origin:0 0;">500.00</div>
<div class="a" style="left:657.92px;top:523.15px;font-size:14px;line-height:14px;color:#595959;transform:scaleX(1.2000);transform-origin:0 0;">26/06/2023</div>
<div class="a" style="left:773.00px;top:523.15px;font-size:14px;line-height:14px;color:#595959;">Household</div>
<div class="a" style="left:994.00px;top:523.15px;font-size:14px;line-height:14px;color:#595959;">Mortgage</div>
<div class="a" style="left:1202.50px;top:523.15px;font-size:14px;line-height:14px;color:#595959;">$</div>
<div class="a" style="left:1249.05px;top:523.15px;font-size:14px;line-height:14px;color:#595959;transform:scaleX(1.1000);transform-origin:0 0;">1,000.00</div>
<div class="a" style="left:619px;top:551px;width:137px;height:38px;background:#faedc2;"></div>
<div class="a" style="left:758px;top:551px;width:219px;height:38px;background:#faedc2;"></div>
<div class="a" style="left:979px;top:551px;width:214px;height:38px;background:#faedc2;"></div>
<div class="a" style="left:1195px;top:551px;width:122px;height:38px;background:#faedc2;"></div>
<div class="a" style="left:657.92px;top:563.15px;font-size:14px;line-height:14px;color:#262626;transform:scaleX(1.2000);transform-origin:0 0;">26/06/2023</div>
<div class="a" style="left:773.00px;top:563.15px;font-size:14px;line-height:14px;color:#262626;">Household</div>
<div class="a" style="left:994.00px;top:563.15px;font-size:14px;line-height:14px;color:#262626;">Electricity</div>
<div class="a" style="left:1202.50px;top:563.15px;font-size:14px;line-height:14px;color:#262626;">$</div>
<div class="a" style="left:1261.90px;top:563.15px;font-size:14px;line-height:14px;color:#262626;transform:scaleX(1.1000);transform-origin:0 0;">100.00</div>
<div class="a" style="left:657.92px;top:603.15px;font-size:14px;line-height:14px;color:#595959;transform:scaleX(1.2000);transform-origin:0 0;">26/06/2023</div>
<div class="a" style="left:773.00px;top:603.15px;font-size:14px;line-height:14px;color:#595959;">Household</div>
<div class="a" style="left:994.00px;top:603.15px;font-size:14px;line-height:14px;color:#595959;">Water/sewer</div>
<div class="a" style="left:1202.50px;top:603.15px;font-size:14px;line-height:14px;color:#595959;">$</div>
<div class="a" style="left:1270.46px;top:603.15px;font-size:14px;line-height:14px;color:#595959;transform:scaleX(1.1000);transform-origin:0 0;">50.00</div>
<div class="a" style="left:619px;top:631px;width:137px;height:38px;background:#faedc2;"></div>
<div class="a" style="left:758px;top:631px;width:219px;height:38px;background:#faedc2;"></div>
<div class="a" style="left:979px;top:631px;width:214px;height:38px;background:#faedc2;"></div>
<div class="a" style="left:1195px;top:631px;width:122px;height:38px;background:#faedc2;"></div>
<div class="a" style="left:657.92px;top:643.15px;font-size:14px;line-height:14px;color:#262626;transform:scaleX(1.2000);transform-origin:0 0;">26/06/2023</div>
<div class="a" style="left:773.00px;top:643.15px;font-size:14px;line-height:14px;color:#262626;">Household</div>
<div class="a" style="left:994.00px;top:643.15px;font-size:14px;line-height:14px;color:#262626;">Garbage</div>
<div class="a" style="left:1202.50px;top:643.15px;font-size:14px;line-height:14px;color:#262626;">$</div>
<div class="a" style="left:1270.46px;top:643.15px;font-size:14px;line-height:14px;color:#262626;transform:scaleX(1.1000);transform-origin:0 0;">25.00</div>
<div class="a" style="left:657.92px;top:683.15px;font-size:14px;line-height:14px;color:#595959;transform:scaleX(1.2000);transform-origin:0 0;">26/06/2023</div>
<div class="a" style="left:773.00px;top:683.15px;font-size:14px;line-height:14px;color:#595959;">Household</div>
<div class="a" style="left:994.00px;top:683.15px;font-size:14px;line-height:14px;color:#595959;">Cell phone</div>
<div class="a" style="left:1202.50px;top:683.15px;font-size:14px;line-height:14px;color:#595959;">$</div>
<div class="a" style="left:1261.90px;top:683.15px;font-size:14px;line-height:14px;color:#595959;transform:scaleX(1.1000);transform-origin:0 0;">100.00</div>
<div class="a" style="left:619px;top:711px;width:137px;height:38px;background:#faedc2;"></div>
<div class="a" style="left:758px;top:711px;width:219px;height:38px;background:#faedc2;"></div>
<div class="a" style="left:979px;top:711px;width:214px;height:38px;background:#faedc2;"></div>
<div class="a" style="left:1195px;top:711px;width:122px;height:38px;background:#faedc2;"></div>
<div class="a" style="left:657.92px;top:723.15px;font-size:14px;line-height:14px;color:#262626;transform:scaleX(1.2000);transform-origin:0 0;">26/06/2023</div>
<div class="a" style="left:773.00px;top:723.15px;font-size:14px;line-height:14px;color:#262626;">Household</div>
<div class="a" style="left:994.00px;top:723.15px;font-size:14px;line-height:14px;color:#262626;">Cell phone</div>
<div class="a" style="left:1202.50px;top:723.15px;font-size:14px;line-height:14px;color:#262626;">$</div>
<div class="a" style="left:1270.46px;top:723.15px;font-size:14px;line-height:14px;color:#262626;transform:scaleX(1.1000);transform-origin:0 0;">30.00</div>
<div class="a" style="left:657.92px;top:763.15px;font-size:14px;line-height:14px;color:#595959;transform:scaleX(1.2000);transform-origin:0 0;">26/06/2023</div>
<div class="a" style="left:773.00px;top:763.15px;font-size:14px;line-height:14px;color:#595959;">Household</div>
<div class="a" style="left:994.00px;top:763.15px;font-size:14px;line-height:14px;color:#595959;">Mortgage</div>
<div class="a" style="left:1202.50px;top:763.15px;font-size:14px;line-height:14px;color:#595959;">$</div>
<div class="a" style="left:1270.46px;top:763.15px;font-size:14px;line-height:14px;color:#595959;transform:scaleX(1.1000);transform-origin:0 0;">50.00</div>
<div class="a" style="left:619px;top:791px;width:137px;height:38px;background:#faedc2;"></div>
<div class="a" style="left:758px;top:791px;width:219px;height:38px;background:#faedc2;"></div>
<div class="a" style="left:979px;top:791px;width:214px;height:38px;background:#faedc2;"></div>
<div class="a" style="left:1195px;top:791px;width:122px;height:38px;background:#faedc2;"></div>
<div class="a" style="left:657.92px;top:803.15px;font-size:14px;line-height:14px;color:#262626;transform:scaleX(1.2000);transform-origin:0 0;">26/06/2023</div>
<div class="a" style="left:773.00px;top:803.15px;font-size:14px;line-height:14px;color:#262626;">Household</div>
<div class="a" style="left:994.00px;top:803.15px;font-size:14px;line-height:14px;color:#262626;">Cell phone</div>
<div class="a" style="left:1202.50px;top:803.15px;font-size:14px;line-height:14px;color:#262626;">$</div>
<div class="a" style="left:1270.46px;top:803.15px;font-size:14px;line-height:14px;color:#262626;transform:scaleX(1.1000);transform-origin:0 0;">50.00</div>
<div class="a" style="left:657.92px;top:843.15px;font-size:14px;line-height:14px;color:#595959;transform:scaleX(1.2000);transform-origin:0 0;">26/06/2023</div>
<div class="a" style="left:773.00px;top:843.15px;font-size:14px;line-height:14px;color:#595959;">Household</div>
<div class="a" style="left:994.00px;top:843.15px;font-size:14px;line-height:14px;color:#595959;">Cell phone</div>
<div class="a" style="left:1202.50px;top:843.15px;font-size:14px;line-height:14px;color:#595959;">$</div>
<div class="a" style="left:1270.46px;top:843.15px;font-size:14px;line-height:14px;color:#595959;transform:scaleX(1.1000);transform-origin:0 0;">25.00</div>
<div class="a" style="left:619px;top:871px;width:137px;height:38px;background:#faedc2;"></div>
<div class="a" style="left:758px;top:871px;width:219px;height:38px;background:#faedc2;"></div>
<div class="a" style="left:979px;top:871px;width:214px;height:38px;background:#faedc2;"></div>
<div class="a" style="left:1195px;top:871px;width:122px;height:38px;background:#faedc2;"></div>
<div class="a" style="left:657.92px;top:883.15px;font-size:14px;line-height:14px;color:#262626;transform:scaleX(1.2000);transform-origin:0 0;">25/06/2023</div>
<div class="a" style="left:773.00px;top:883.15px;font-size:14px;line-height:14px;color:#262626;">Household</div>
<div class="a" style="left:994.00px;top:883.15px;font-size:14px;line-height:14px;color:#262626;">Electricity</div>
<div class="a" style="left:1202.50px;top:883.15px;font-size:14px;line-height:14px;color:#262626;">$</div>
<div class="a" style="left:1261.90px;top:883.15px;font-size:14px;line-height:14px;color:#262626;transform:scaleX(1.1000);transform-origin:0 0;">100.00</div>
<div class="a" style="left:657.92px;top:923.15px;font-size:14px;line-height:14px;color:#595959;transform:scaleX(1.2000);transform-origin:0 0;">24/06/2023</div>
<div class="a" style="left:773.00px;top:923.15px;font-size:14px;line-height:14px;color:#595959;">Entertainment</div>
<div class="a" style="left:994.00px;top:923.15px;font-size:14px;line-height:14px;color:#595959;">Movies</div>
<div class="a" style="left:1202.50px;top:923.15px;font-size:14px;line-height:14px;color:#595959;">$</div>
<div class="a" style="left:1270.46px;top:923.15px;font-size:14px;line-height:14px;color:#595959;transform:scaleX(1.1000);transform-origin:0 0;">37.00</div>
<div class="a" style="left:619px;top:951px;width:137px;height:38px;background:#faedc2;"></div>
<div class="a" style="left:758px;top:951px;width:219px;height:38px;background:#faedc2;"></div>
<div class="a" style="left:979px;top:951px;width:214px;height:38px;background:#faedc2;"></div>
<div class="a" style="left:1195px;top:951px;width:122px;height:38px;background:#faedc2;"></div>
<div class="a" style="left:34px;top:590px;width:43px;height:40px;background:#f4f4f4;"></div>
<div class="a" style="left:1318px;top:590px;width:44px;height:40px;background:#f4f4f4;"></div>
<div class="a" style="left:32px;top:309px;width:49px;height:68px;border:2px solid #107c41"></div>
<div class="a" style="left:34px;top:311px;width:45px;height:64px;border:1px solid #fff"></div>
<div class="a" style="left:77px;top:372px;width:6px;height:6px;background:#107c41;border:1px solid #fff"></div>
<div class="a" style="left:424px;top:409px;width:170px;height:484px;border:4px solid #ff0000;border-radius:5px"></div>
</body></html>
